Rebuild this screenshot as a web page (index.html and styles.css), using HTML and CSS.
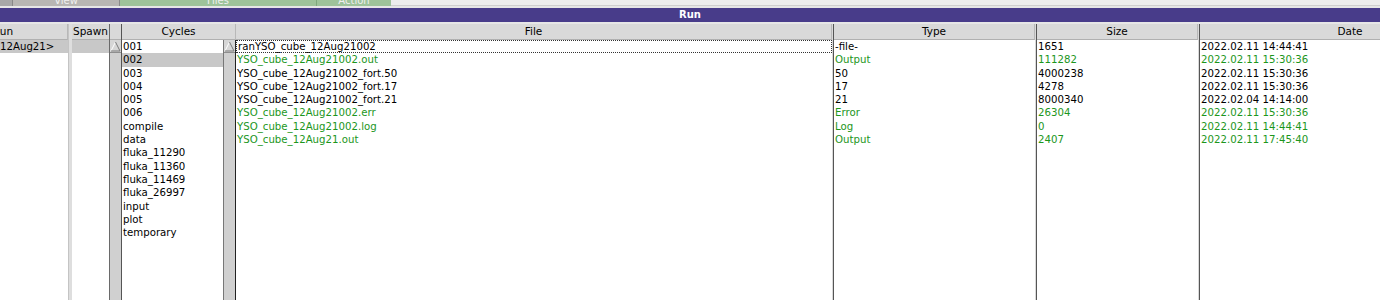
FILE: index.html
```html
<!DOCTYPE html>
<html>
<head>
<meta charset="utf-8">
<link rel="stylesheet" href="styles.css">
</head>
<body>
<div class="tabs">
  <div class="tab t0"></div>
  <div class="tab t1"><span>View</span></div>
  <div class="tab t2"><span>Files</span></div>
  <div class="tab t3"><span>Action</span></div>
  <div class="tab t4"></div>
</div>
<div class="gap"></div>
<div class="title">Run</div>
<div class="gap"></div>
<div class="panel">
  <div class="col c-run">
    <div class="hdr hdr-left"><span class="clip-run">Run</span></div>
    <div class="body"><div class="row sel">12Aug21&gt;</div></div>
  </div>
  <div class="sash"></div>
  <div class="col c-spawn">
    <div class="hdr">Spawn</div>
    <div class="body"><div class="row sel"></div></div>
  </div>
  <div class="sbar">
    <div class="sbtop"></div>
    <div class="sbtn"><svg width="11" height="11" viewBox="0 0 11 11"><path d="M1 10 L5.5 1 L10 10 Z" fill="#d6d6d6"/><path d="M1 10 L5.5 1" stroke="#ffffff" stroke-width="1" fill="none"/><path d="M5.5 1 L10 10 L1 10" stroke="#7a7a7a" stroke-width="1" fill="none"/></svg></div>
  </div>
  <div class="col c-cycgrp">
    <div class="hdr">Cycles</div>
    <div class="cycbody">
      <div class="body cyclist">
        <div class="row">001</div>
        <div class="row sel">002</div>
        <div class="row">003</div>
        <div class="row">004</div>
        <div class="row">005</div>
        <div class="row">006</div>
        <div class="row">compile</div>
        <div class="row">data</div>
        <div class="row">fluka_11290</div>
        <div class="row">fluka_11360</div>
        <div class="row">fluka_11469</div>
        <div class="row">fluka_26997</div>
        <div class="row">input</div>
        <div class="row">plot</div>
        <div class="row">temporary</div>
      </div>
      <div class="sbar sbar2">
        <div class="sbtn"><svg width="11" height="11" viewBox="0 0 11 11"><path d="M1 10 L5.5 1 L10 10 Z" fill="#d6d6d6"/><path d="M1 10 L5.5 1" stroke="#ffffff" stroke-width="1" fill="none"/><path d="M5.5 1 L10 10 L1 10" stroke="#7a7a7a" stroke-width="1" fill="none"/></svg></div>
      </div>
    </div>
  </div>
  <div class="col c-file">
    <div class="hdr">File</div>
    <div class="body">
      <div class="row focus">ranYSO_cube_12Aug21002</div>
      <div class="row g">YSO_cube_12Aug21002.out</div>
      <div class="row">YSO_cube_12Aug21002_fort.50</div>
      <div class="row">YSO_cube_12Aug21002_fort.17</div>
      <div class="row">YSO_cube_12Aug21002_fort.21</div>
      <div class="row g">YSO_cube_12Aug21002.err</div>
      <div class="row g">YSO_cube_12Aug21002.log</div>
      <div class="row g">YSO_cube_12Aug21.out</div>
    </div>
  </div>
  <div class="vsep"></div>
  <div class="col c-type">
    <div class="hdr">Type</div>
    <div class="body">
      <div class="row">-file-</div>
      <div class="row g">Output</div>
      <div class="row">50</div>
      <div class="row">17</div>
      <div class="row">21</div>
      <div class="row g">Error</div>
      <div class="row g">Log</div>
      <div class="row g">Output</div>
    </div>
  </div>
  <div class="vsep"></div>
  <div class="col c-size">
    <div class="hdr">Size</div>
    <div class="body">
      <div class="row">1651</div>
      <div class="row g">111282</div>
      <div class="row">4000238</div>
      <div class="row">4278</div>
      <div class="row">8000340</div>
      <div class="row g">26304</div>
      <div class="row g">0</div>
      <div class="row g">2407</div>
    </div>
  </div>
  <div class="vsep"></div>
  <div class="col c-date">
    <div class="hdr">Date</div>
    <div class="body">
      <div class="row">2022.02.11 14:44:41</div>
      <div class="row g">2022.02.11 15:30:36</div>
      <div class="row">2022.02.11 15:30:36</div>
      <div class="row">2022.02.11 15:30:36</div>
      <div class="row">2022.02.04 14:14:00</div>
      <div class="row g">2022.02.11 15:30:36</div>
      <div class="row g">2022.02.11 14:44:41</div>
      <div class="row g">2022.02.11 17:45:40</div>
    </div>
  </div>
</div>
</body>
</html>
```

FILE: styles.css
```css
html, body {
  margin: 0;
  padding: 0;
  width: 1380px;
  height: 300px;
  overflow: hidden;
  background: #e6e6e6;
  font-family: "DejaVu Sans", sans-serif;
  font-size: 10px;
  color: #000;
}

.tabs {
  display: flex;
  height: 6px;
  overflow: hidden;
}
.tab {
  height: 6px;
  overflow: hidden;
  text-align: center;
  color: #f0f0f0;
  font-size: 10px;
  box-sizing: border-box;
}
.tab span {
  display: block;
  line-height: 2px;
}
.t0 { width: 13px; background: #a8a8a8; border-right: 1px solid #888; }
.t1 { width: 107px; background: #b8b6b3; border-right: 1px solid #8a8a8a; }
.t2 { width: 197px; background: #9ec39a; border-right: 1px solid #7fa77c; }
.t3 { width: 74px; background: #9ec39a; }
.t4 { flex: 1; background: #ededed; border-bottom: 1px solid #cfcfcf; }

.gap { height: 2px; background: #e6e6e6; }

.title {
  height: 14px;
  background: #483c8a;
  color: #fff;
  font-weight: bold;
  text-align: center;
  line-height: 14px;
  font-size: 10px;
}

.panel {
  display: flex;
  height: 276px;
  background: #fff;
}

.col {
  display: flex;
  flex-direction: column;
  overflow: hidden;
  flex: none;
}
.hdr {
  height: 15px;
  line-height: 15px;
  font-size: 10.5px;
  background: #d9d9d9;
  border-bottom: 1px solid #b0b0b0;
  border-right: 1px solid #b8b8b8;
  text-align: center;
  white-space: nowrap;
  overflow: hidden;
  flex: none;
}
.hdr-left { text-align: left; }
.body {
  flex: 1;
  background: #fff;
  overflow: hidden;
}
.row {
  height: 13.3px;
  line-height: 13.3px;
  white-space: nowrap;
  padding-left: 1px;
  box-sizing: border-box;
  font-size: 10.2px;
}
.row.sel { background: #c8c8c8; }
.row.g { color: #1c961c; }
.row.focus { border: 1px dotted #333; line-height: 11.3px; padding-left: 0; }

.clip-run { margin-left: -7px; display: inline-block; }

.c-run { width: 68px; }
.c-run .row { padding-left: 0; }
.sash {
  width: 3px;
  background: #dedede;
  border-left: 1px solid #c4c4c4;
  flex: none;
}
.c-spawn { width: 37px; }
.c-spawn .hdr { border-right: none; }

.sbar {
  width: 11px;
  flex: none;
  background: #d0d0d0;
  border-left: 1px solid #6a6a6a;
  border-right: 1px solid #555;
  display: flex;
  flex-direction: column;
}
.sbtop {
  height: 15px;
  background: #d9d9d9;
  border-bottom: 1px solid #b0b0b0;
  flex: none;
}
.sbtn {
  height: 12px;
  background: #d6d6d6;
  border-bottom: 1px solid #8e8e8e;
  display: flex;
  align-items: center;
  justify-content: center;
  flex: none;
}

.c-cycgrp { width: 114px; }
.cycbody {
  flex: 1;
  display: flex;
}
.cyclist { width: 101px; flex: none; }
.sbar2 { border-left: 1px solid #777; border-right: 1px solid #222; }

.c-file { width: 596px; }
.c-file .row { padding-left: 1px; }
.vsep {
  width: 2px;
  flex: none;
  background: linear-gradient(to right, #d9d9d9 0 1px, #555 1px 2px);
}
.c-type { width: 201px; }
.c-size { width: 161px; }
.c-date { width: 300px; }
.c-date .hdr { border-right: none; }
```
